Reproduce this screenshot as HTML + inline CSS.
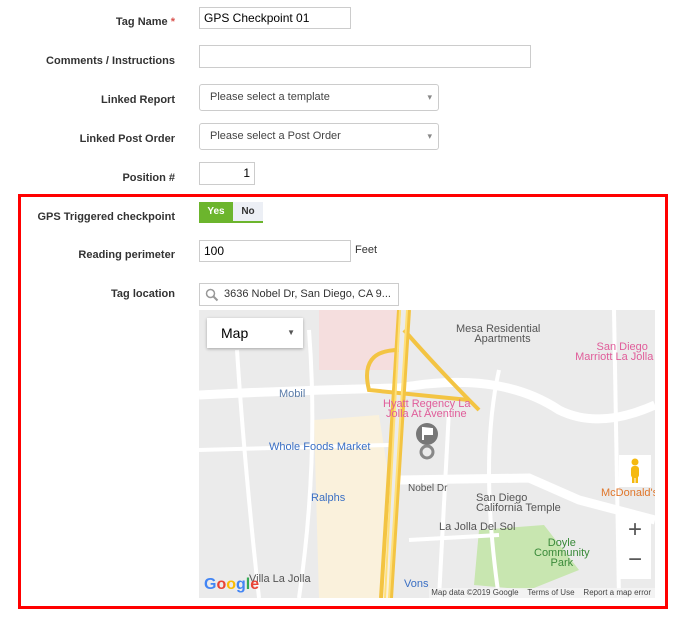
<!DOCTYPE html>
<html><head><style>
body{margin:0;width:689px;height:622px;background:#fff;font-family:"Liberation Sans",sans-serif;position:relative;overflow:hidden}
.l{position:absolute;right:514px;font-size:11px;font-weight:bold;color:#333;white-space:nowrap}
.i{position:absolute;border:1px solid #ccc;box-sizing:border-box;font-size:12px;color:#000;padding-left:4px;background:#fff}
.s{position:absolute;border:1px solid #ccc;border-radius:3px;box-sizing:border-box;font-size:11px;color:#444;padding-left:10px;line-height:24px;background:#fff}
.s:after{content:"▾";position:absolute;right:6px;top:0;font-size:9px;color:#888}
.mt{position:absolute;font-size:10px;white-space:nowrap}
</style></head><body>
<div class="l" style="top:16px">Tag Name <span style="color:#d9534f">*</span></div>
<div class="i" style="left:199px;top:7px;width:152px;height:22px;line-height:20px">GPS Checkpoint 01</div>
<div class="l" style="top:55px">Comments / Instructions</div>
<div class="i" style="left:199px;top:45px;width:332px;height:23px"></div>
<div class="l" style="top:94px">Linked Report</div>
<div class="s" style="left:199px;top:84px;width:240px;height:27px">Please select a template</div>
<div class="l" style="top:133px">Linked Post Order</div>
<div class="s" style="left:199px;top:123px;width:240px;height:27px">Please select a Post Order</div>
<div class="l" style="top:172px">Position #</div>
<div class="i" style="left:199px;top:162px;width:56px;height:23px;text-align:right;padding-right:4px;line-height:21px">1</div>
<div style="position:absolute;left:18px;top:194px;width:650px;height:415px;border:3px solid #f00;box-sizing:border-box"></div>
<div class="l" style="top:211px">GPS Triggered checkpoint</div>
<div style="position:absolute;left:199px;top:202px;width:64px;height:19px;border-bottom:2px solid #6cb52d;font-size:10px;font-weight:bold">
<div style="position:absolute;left:0;top:0;width:34px;height:19px;background:#6cb52d;color:#fff;text-align:center;line-height:20px">Yes</div>
<div style="position:absolute;left:34px;top:0;width:30px;height:19px;background:#eceff5;color:#333;text-align:center;line-height:20px">No</div></div>
<div class="l" style="top:249px">Reading perimeter</div>
<div class="i" style="left:199px;top:240px;width:152px;height:22px;line-height:20px">100</div>
<div style="position:absolute;left:355px;top:244px;font-size:11px;color:#333">Feet</div>
<div class="l" style="top:288px">Tag location</div>
<div class="i" style="left:199px;top:283px;width:200px;height:23px;line-height:21px;font-size:11px;color:#333;background:#fff;padding-left:24px">3636 Nobel Dr, San Diego, CA 9...
<svg style="position:absolute;left:5px;top:4px" width="14" height="14"><circle cx="5.5" cy="5.5" r="4" fill="none" stroke="#999" stroke-width="1.5"/><line x1="8.5" y1="8.5" x2="12.5" y2="12.5" stroke="#999" stroke-width="2"/></svg></div>
<div style="position:absolute;left:199px;top:310px;width:456px;height:288px;overflow:hidden;background:#ebebeb">
<svg width="456" height="288" style="position:absolute;left:0;top:0">
<rect x="120" y="0" width="80" height="60" fill="#f5dede"/>
<path d="M115 110 L180 105 L190 170 L190 288 L120 288 Z" fill="#faf1dc"/>
<path d="M280 220 L345 215 L380 260 L330 280 L275 275 Z" fill="#c8e6b0"/>
<g fill="none" stroke="#fff" stroke-width="9">
<path d="M0 85 Q100 80 200 78 Q300 60 360 100 Q400 120 456 95"/>
<path d="M200 170 L330 168 L380 190 L456 210"/>
</g>
<g fill="none" stroke="#fff" stroke-width="4">
<path d="M38 40 Q45 150 60 288"/><path d="M110 20 Q120 150 100 288"/><path d="M300 60 Q280 150 300 288"/>
<path d="M415 0 L420 288"/><path d="M0 140 L190 135"/><path d="M210 230 L300 225"/><path d="M250 100 L240 288"/>
</g>
<g fill="none" stroke="#f3c443" stroke-width="4">
<path d="M200 0 L182 288"/><path d="M210 0 L192 288"/><path d="M205 20 Q240 60 280 100"/><path d="M200 40 Q160 40 170 80 L270 90"/>
</g>
<path d="M201 0 L186 288 M208 0 L190 288" stroke="#ffe07a" stroke-width="2" fill="none"/>
<circle cx="228" cy="124" r="11" fill="#777"/><circle cx="228" cy="142" r="6" fill="none" stroke="#888" stroke-width="3"/>
<path d="M224 130 L224 118 L233 119 L233 124 L225 124" stroke="#fff" stroke-width="2" fill="#fff"/>
</svg>
<div class="mt" style="left:80px;top:78px;color:#5a7ba8;font-size:11px">Mobil</div>
<div class="mt" style="left:184px;top:89px;color:#e05d9a;font-size:11px;line-height:10px">Hyatt Regency La<br>&nbsp;Jolla At Aventine</div>
<div class="mt" style="left:257px;top:14px;color:#555;font-size:11px;line-height:10px">Mesa Residential<br>&nbsp;&nbsp;&nbsp;&nbsp;&nbsp;&nbsp;Apartments</div>
<div class="mt" style="left:370px;top:32px;color:#e05d9a;font-size:11px;line-height:10px">&nbsp;&nbsp;&nbsp;&nbsp;&nbsp;&nbsp;&nbsp;&nbsp;&nbsp;San Diego<br>&nbsp;&nbsp;Marriott La Jolla</div>
<div class="mt" style="left:70px;top:131px;color:#3a6fc4;font-size:11px">Whole Foods Market</div>
<div class="mt" style="left:112px;top:182px;color:#3a6fc4;font-size:11px">Ralphs</div>
<div class="mt" style="left:209px;top:173px;color:#555">Nobel Dr</div>
<div class="mt" style="left:277px;top:183px;color:#555;font-size:11px;line-height:10px">San Diego<br>California Temple</div>
<div class="mt" style="left:240px;top:211px;color:#555;font-size:11px">La Jolla Del Sol</div>
<div class="mt" style="left:335px;top:228px;color:#3a8a3a;font-size:11px;line-height:10px;text-align:center">Doyle<br>Community<br>Park</div>
<div class="mt" style="left:50px;top:263px;color:#555;font-size:11px">Villa La Jolla</div>
<div class="mt" style="left:205px;top:268px;color:#3a6fc4;font-size:11px">Vons</div>
<div class="mt" style="left:402px;top:177px;color:#e0762a;font-size:11px">McDonald's</div>
<div style="position:absolute;left:8px;top:8px;width:96px;height:30px;background:#fff;box-shadow:0 1px 3px rgba(0,0,0,.3);font-size:14px;line-height:30px;padding-left:14px;box-sizing:border-box">Map<span style="position:absolute;right:8px;font-size:8px;color:#555">▼</span></div>
<div style="position:absolute;left:420px;top:145px;width:32px;height:32px;background:#fff;text-align:center"><svg width="14" height="26" style="margin-top:3px"><circle cx="7" cy="4" r="3.5" fill="#f5b90f"/><rect x="3" y="8" width="8" height="12" rx="3" fill="#f5b90f"/><rect x="4" y="18" width="2.5" height="7" fill="#f5b90f"/><rect x="7.5" y="18" width="2.5" height="7" fill="#f5b90f"/></svg></div>
<div style="position:absolute;left:420px;top:205px;width:32px;height:64px;background:#fff;font-size:24px;text-align:center;color:#555;line-height:30px">+<br>−</div>
<div class="mt" style="left:5px;top:266px;font-size:16px;font-weight:bold"><span style="color:#4285f4">G</span><span style="color:#ea4335">o</span><span style="color:#fbbc05">o</span><span style="color:#4285f4">g</span><span style="color:#34a853">l</span><span style="color:#ea4335">e</span></div>
<div class="mt" style="left:230px;top:278px;width:226px;height:10px;background:rgba(245,245,245,.8);font-size:8px;color:#444;line-height:10px">&nbsp;Map data ©2019 Google &nbsp;&nbsp;&nbsp;Terms of Use &nbsp;&nbsp;&nbsp;Report a map error</div>
</div>
</body></html>
